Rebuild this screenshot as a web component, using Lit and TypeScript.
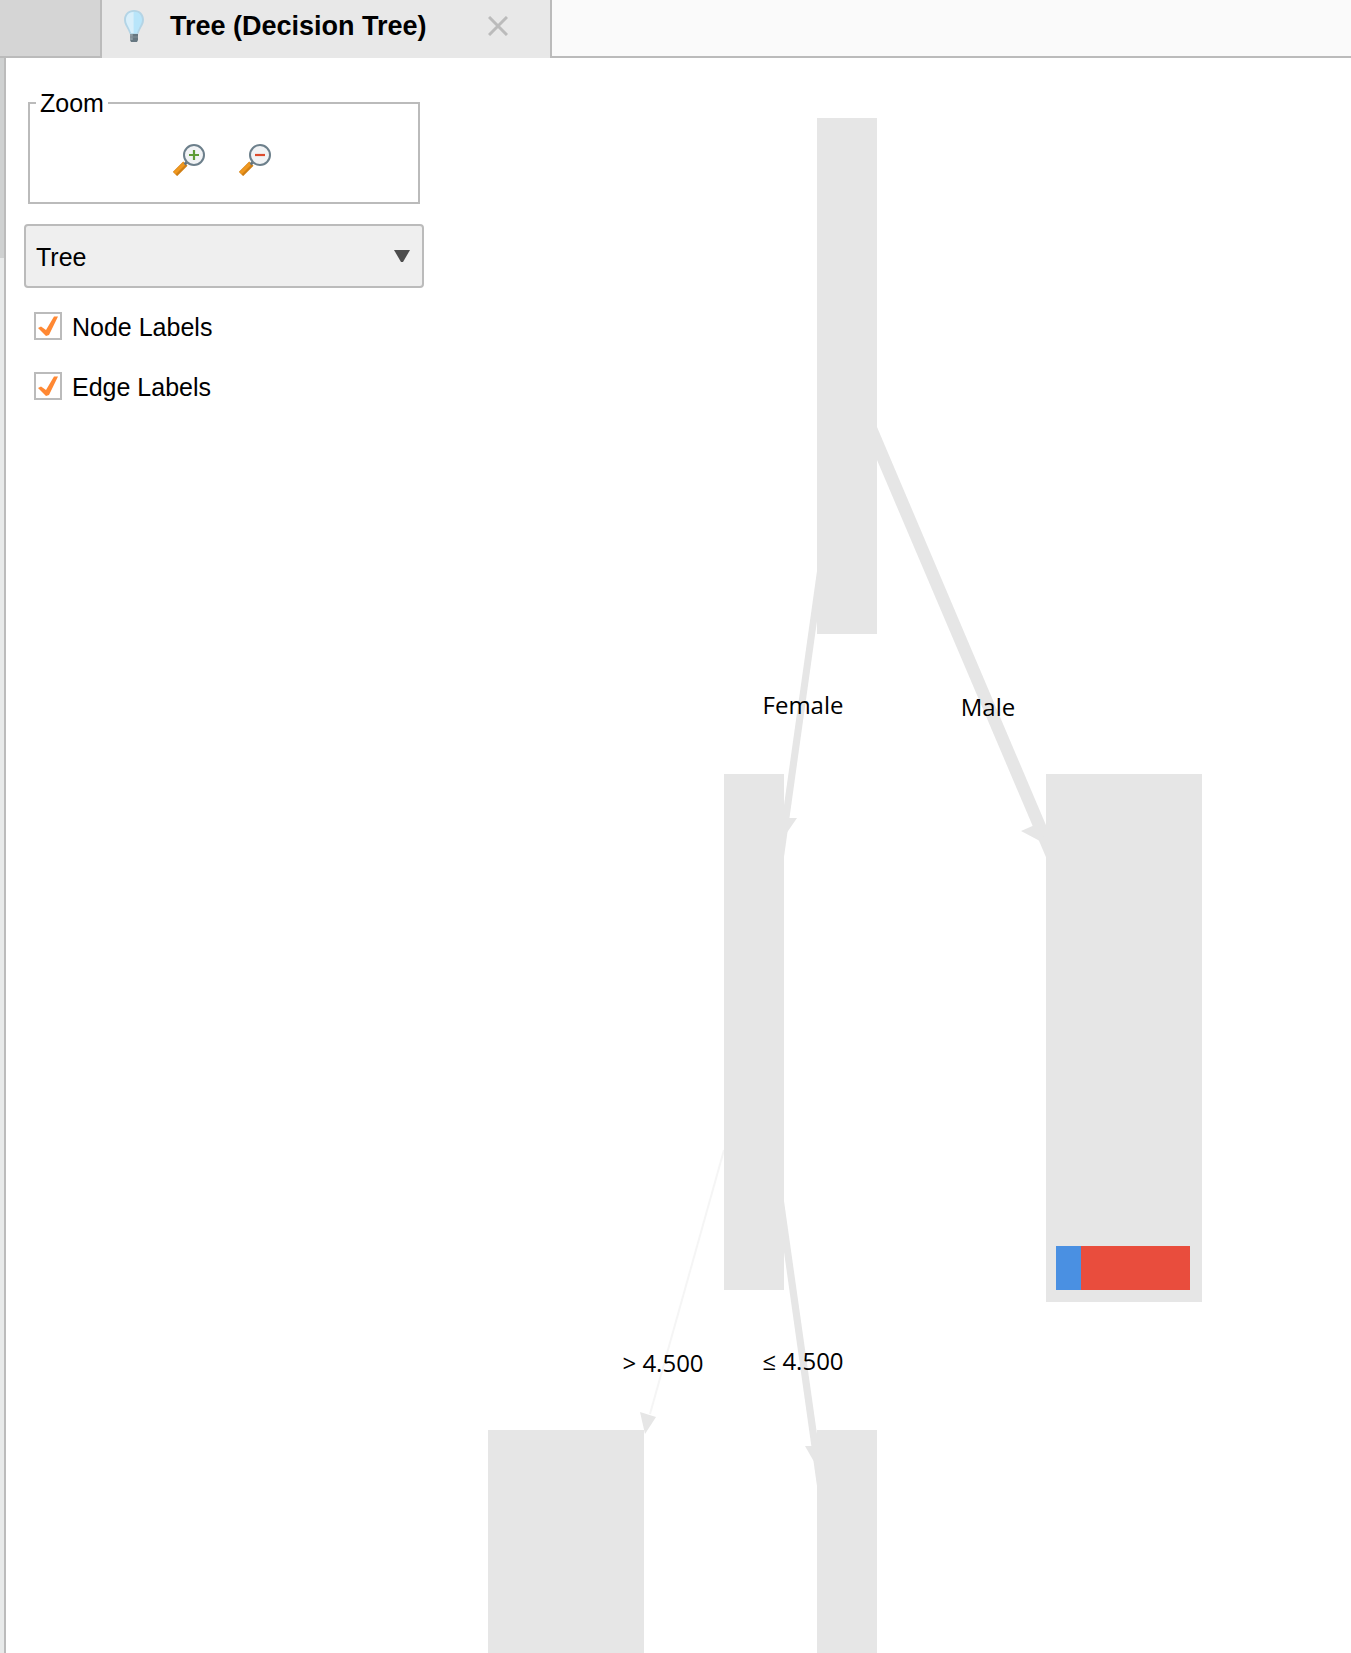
import { LitElement, html, svg, css } from "lit";
import { customElement, state } from "lit/decorators.js";

interface TreeNode {
  x: number;
  y: number;
  width: number;
  height: number;
}

interface TreeEdge {
  line: string;
  head: string;
  thin?: boolean;
}

interface EdgeLabel {
  x: number;
  y: number;
  text: string;
}

const NODES: TreeNode[] = [
  { x: 393, y: 60, width: 60, height: 516 },
  { x: 300, y: 716, width: 60, height: 516 },
  { x: 622, y: 716, width: 156, height: 528 },
  { x: 64, y: 1372, width: 156, height: 528 },
  { x: 393, y: 1372, width: 60, height: 516 },
];

const EDGES: TreeEdge[] = [
  { line: "393,513 393,563 360,799 352,804", head: "353,760 373,760 362,776 357,784" },
  { line: "453,369 630,786 630,818 453,402", head: "597,773 613,766 626,790 614,782" },
  { line: "300,1092 226,1356", head: "216,1354 232,1359 221,1376", thin: true },
  { line: "360,1143 393,1376 393,1428 360,1194", head: "381,1388 396,1388 396,1410 389,1402" },
];

const LABELS: EdgeLabel[] = [
  { x: 379, y: 656, text: "Female" },
  { x: 564, y: 658, text: "Male" },
  { x: 239, y: 1314, text: "> 4.500" },
  { x: 379, y: 1312, text: "≤ 4.500" },
];

@customElement("decision-tree-canvas")
export class DecisionTreeCanvas extends LitElement {
  static properties = {
    nodeLabels: { type: Boolean },
    edgeLabels: { type: Boolean },
  };
  declare nodeLabels: boolean;
  declare edgeLabels: boolean;

  constructor() {
    super();
    this.nodeLabels = true;
    this.edgeLabels = true;
  }

  static styles = css`
    :host {
      display: block;
      overflow: hidden;
    }
    .graph {
      display: block;
      width: 100%;
      height: 100%;
    }
    .shape {
      fill: #e6e6e6;
    }
    .thin {
      fill: none;
      stroke: #f5f5f5;
      stroke-width: 2;
    }
    .negative {
      fill: #4a90e2;
    }
    .positive {
      fill: #e94d3d;
    }
    .label {
      font: 24px "Open Sans", "Noto Sans", sans-serif;
      fill: #000;
      text-anchor: middle;
    }
  `;

  render() {
    return html`
      <svg class="graph" role="img" aria-label="Decision tree">
        ${EDGES.map((e) =>
          e.thin
            ? svg`<polyline class="thin" points=${e.line} />`
            : svg`<polygon class="shape" points=${e.line} />`
        )}
        ${EDGES.map((e) => svg`<polygon class="shape" points=${e.head} />`)}
        ${NODES.map(
          (n) => svg`<rect class="shape" x=${n.x} y=${n.y} width=${n.width} height=${n.height} />`
        )}
        ${this.nodeLabels
          ? svg`
              <rect class="negative" x="632" y="1188" width="25" height="44" />
              <rect class="positive" x="657" y="1188" width="109" height="44" />
            `
          : null}
        ${this.edgeLabels
          ? LABELS.map((l) => svg`<text class="label" x=${l.x} y=${l.y}>${l.text}</text>`)
          : null}
      </svg>
    `;
  }
}

@customElement("app-root")
export class AppRoot extends LitElement {
  @state() nodeLabels = true;
  @state() edgeLabels = true;

  static styles = css`
    :host {
      display: flex;
      flex-direction: column;
      height: 100vh;
      background: #fff;
      color: #000;
      font: 25px/30px "Liberation Sans", Arial, sans-serif;
    }
    * {
      box-sizing: border-box;
    }
    .tabs {
      display: flex;
      flex: none;
      height: 58px;
    }
    .previous {
      width: 100px;
      background: #d5d5d5;
      border-bottom: 2px solid #bbb;
    }
    .tab {
      display: flex;
      align-items: center;
      justify-content: space-between;
      width: 452px;
      padding: 0 42px 6px 22px;
      background: #e8e8e8;
      border: solid #bbb;
      border-width: 0 2px;
    }
    .tab-name {
      display: flex;
      align-items: center;
      gap: 26px;
    }
    .bulb {
      width: 20px;
      height: 32px;
    }
    .title {
      margin: 0;
      font-size: 27px;
      font-weight: bold;
      white-space: nowrap;
    }
    .rest {
      flex: 1;
      background: #fafafa;
      border-bottom: 2px solid #bbb;
    }
    button {
      display: block;
      padding: 0;
      border: 0;
      background: none;
      cursor: pointer;
    }
    button svg {
      display: block;
    }
    .body {
      display: flex;
      flex: 1;
      min-height: 0;
    }
    .edge {
      flex: none;
      width: 6px;
      background: #e8eaea;
      border-right: 2px solid #bbb;
    }
    .edge-top {
      height: 200px;
      background: #cfd1d1;
    }
    .controls {
      display: flex;
      flex-direction: column;
      flex: none;
      width: 418px;
      padding: 30px 0 0 18px;
    }
    .zoom {
      min-width: 0;
      height: 116px;
      margin: 0 4px 20px;
      padding: 26px 4px 0 0;
      border: 2px solid #bbb;
    }
    .zoom legend {
      margin-left: 6px;
      padding: 0 4px;
    }
    .zoom-buttons {
      display: flex;
      justify-content: center;
      gap: 34px;
    }
    .picker {
      display: grid;
      align-items: center;
      margin-bottom: 24px;
    }
    .picker > * {
      grid-area: 1 / 1;
    }
    select {
      appearance: none;
      width: 100%;
      height: 64px;
      margin: 0;
      padding: 2px 10px 0;
      border: 2px solid #bbb;
      border-radius: 4px;
      background: #efefef;
      color: inherit;
      font: inherit;
    }
    .arrow {
      justify-self: end;
      margin-right: 14px;
      pointer-events: none;
    }
    .option {
      display: flex;
      align-items: center;
      gap: 10px;
      height: 28px;
      margin: 0 0 32px 10px;
    }
    .option label {
      padding-top: 2px;
    }
    .box {
      display: grid;
    }
    .box > * {
      grid-area: 1 / 1;
    }
    .box input {
      appearance: none;
      width: 28px;
      height: 28px;
      margin: 0;
      border: 2px solid #bbb;
      background: #fff;
    }
    .tick {
      visibility: hidden;
      pointer-events: none;
    }
    .box input:checked + .tick {
      visibility: visible;
    }
    decision-tree-canvas {
      flex: 1;
      min-width: 0;
    }
  `;

  private magnifier(plus: boolean) {
    return html`
      <svg width="32" height="32" viewBox="0 0 16 16">
        <path d="M1 15 6.200 9.800" stroke="#d07f14" stroke-width="3" />
        <path d="M.8 14.600 5.800 9.600" stroke="#f0981f" stroke-width="1.600" />
        <path d="M5.800 10.200 7 9" stroke="#66747c" stroke-width="1.400" />
        <circle cx="10.500" cy="5.500" r="5" fill="#f1f3f5" stroke="#6c7f8b" stroke-width="1" />
        ${plus
          ? svg`<path d="M8 5.500h5M10.500 3v5" stroke="#5d9c36" stroke-width="1.100" />`
          : svg`<path d="M8 5.500h5" stroke="#dd4b2d" stroke-width="1.100" />`}
      </svg>
    `;
  }

  private checkbox(id: string, label: string, checked: boolean, set: (v: boolean) => void) {
    return html`
      <div class="option">
        <span class="box">
          <input
            type="checkbox"
            id=${id}
            .checked=${checked}
            @change=${(e: Event) => set((e.target as HTMLInputElement).checked)}
          />
          <svg class="tick" width="28" height="28" viewBox="0 0 28 28">
            <path d="M4 16 7 14.500 12 18 20 4.500 24 4.500 15 23 12 24Z" fill="#ff8833" />
          </svg>
        </span>
        <label for=${id}>${label}</label>
      </div>
    `;
  }

  render() {
    return html`
      <header class="tabs">
        <div class="previous"></div>
        <div class="tab">
          <div class="tab-name">
            <svg class="bulb" viewBox="0 0 10 16">
              <path
                d="M5 0C2 0 0 2 0 5C0 7 1.200 8.200 2 10L3 12.200H7L8 10C8.800 8.200 10 7 10 5C10 2 8 0 5 0Z"
                fill="#b4d4e5"
              />
              <path
                d="M5 .9C2.600.9 1 2.600 1 5C1 6.800 2.100 8 2.900 10L3.600 11.600H6.400L7.100 10C7.900 8 9 6.800 9 5C9 2.600 7.400.9 5 .9Z"
                fill="#b8e5fa"
              />
              <path d="M4.800 1C2.500 1 1 2.800 1 5C1 6.500 2.200 8 3 10L3.600 11.500H4.800Z" fill="#d9effa" />
              <path d="M3 12H7V15L6.500 16H3.500L3 15Z" fill="#667781" />
              <path d="M3 12H4.400V15H3Z" fill="#8d9ba3" />
              <path d="M3 13.500H7" stroke="#7e8c94" stroke-width=".6" />
            </svg>
            <h1 class="title">Tree (Decision Tree)</h1>
          </div>
          <button aria-label="Close tab">
            <svg width="20" height="20" viewBox="0 0 20 20">
              <path d="M1 1 19 19M19 1 1 19" stroke="#bbb" stroke-width="3" />
            </svg>
          </button>
        </div>
        <div class="rest"></div>
      </header>
      <main class="body">
        <div class="edge"><div class="edge-top"></div></div>
        <section class="controls">
          <fieldset class="zoom">
            <legend>Zoom</legend>
            <div class="zoom-buttons">
              <button aria-label="Zoom in">${this.magnifier(true)}</button>
              <button aria-label="Zoom out">${this.magnifier(false)}</button>
            </div>
          </fieldset>
          <div class="picker">
            <select aria-label="Layout">
              <option>Tree</option>
            </select>
            <svg class="arrow" width="16" height="12" viewBox="0 0 16 12">
              <path d="M0 0H16L9 12H7Z" fill="#4d4d4d" />
            </svg>
          </div>
          ${this.checkbox("nodes", "Node Labels", this.nodeLabels, (v) => (this.nodeLabels = v))}
          ${this.checkbox("edges", "Edge Labels", this.edgeLabels, (v) => (this.edgeLabels = v))}
        </section>
        <decision-tree-canvas
          .nodeLabels=${this.nodeLabels}
          .edgeLabels=${this.edgeLabels}
        ></decision-tree-canvas>
      </main>
    `;
  }
}
